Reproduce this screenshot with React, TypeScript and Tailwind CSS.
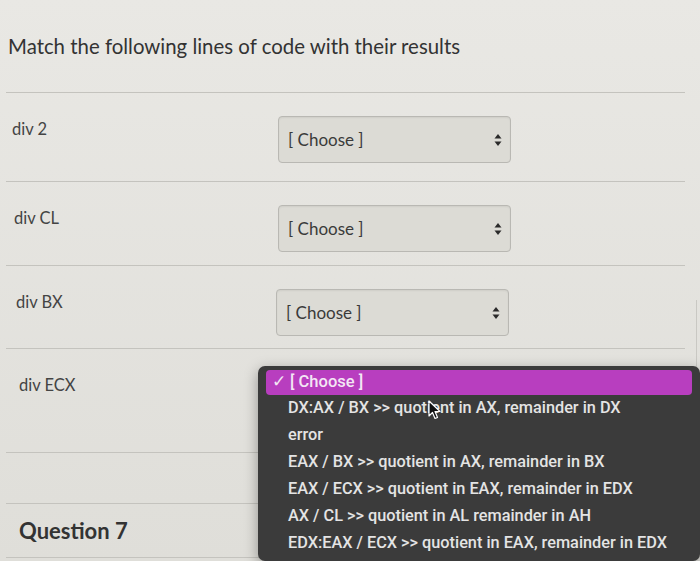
import React from "react";

const rows = [
  { label: "div 2", height: "h-[89px]", pad: "pl-[6px]", shift: "ml-0" },
  { label: "div CL", height: "h-[84px]", pad: "pl-[8px]", shift: "-ml-[2px]" },
  { label: "div BX", height: "h-[83px]", pad: "pl-[10px]", shift: "-ml-[6px]" },
];

const options = [
  "DX:AX / BX >> quotient in AX, remainder in DX",
  "error",
  "EAX / BX >> quotient in AX, remainder in BX",
  "EAX / ECX >> quotient in EAX, remainder in EDX",
  "AX / CL >> quotient in AL remainder in AH",
  "EDX:EAX / ECX >> quotient in EAX, remainder in EDX",
];

function Arrows() {
  return (
    <svg width="8" height="14" viewBox="0 0 8 14" className="text-[#2a2a2a]">
      <path d="M4 1 L7.5 5.5 H0.5 Z" fill="currentColor" />
      <path d="M4 13 L7.5 8.5 H0.5 Z" fill="currentColor" />
    </svg>
  );
}

function FakeSelect({ shift }: { shift: string }) {
  return (
    <div className={`${shift} mt-[23px] flex h-[47px] w-[233px] items-center justify-between rounded-[4px] border border-[#b9b8b3] bg-[#dcdbd5] pl-[9px] pr-[8px] shadow-[inset_0_1px_2px_rgba(0,0,0,0.06)]`}>
      <span className="text-[17px] leading-none text-[#3a3a3a]">[ Choose ]</span>
      <Arrows />
    </div>
  );
}

function Cursor() {
  return (
    <svg width="14" height="20" viewBox="0 0 14 20" className="absolute left-[170px] top-[34px]">
      <path d="M1 1 L1 16 L4.5 12.5 L7 18.5 L9.5 17.5 L7 11.5 L12 11.5 Z" fill="#111" stroke="#fff" strokeWidth="1.2" strokeLinejoin="round" />
    </svg>
  );
}

function DropdownMenu() {
  return (
    <div
      className="absolute left-[258px] top-[366px] w-[442px] rounded-[7px] bg-[#3b3b3b] pt-[4px] pb-[4px] shadow-[0_4px_14px_rgba(0,0,0,0.35)]"
      style={{ fontFamily: "Roboto, 'Liberation Sans', sans-serif" }}
    >
      <div className="mx-[8px] flex h-[25px] items-center rounded-[4px] bg-[#b83ebf] pl-[6px] text-[16.5px] font-medium leading-none text-[#f3e6f4]">
        <span className="w-[18px]">✓</span>
        <span>[ Choose ]</span>
      </div>
      {options.map((o) => (
        <div key={o} className="flex h-[27px] items-center pl-[30px] text-[16.3px] font-medium leading-none text-[#e4e4e4]">
          {o}
        </div>
      ))}
      <Cursor />
    </div>
  );
}

export default function App() {
  return (
    <div
      className="relative h-[561px] w-[700px] overflow-hidden bg-gradient-to-b from-[#e9e8e4] to-[#dfded9] text-[#3b3b3b]"
      style={{ fontFamily: "Lato, 'Open Sans', sans-serif" }}
    >
      <div className="h-[92px] pl-[8px] pt-[33px]">
        <h1 className="text-[20.4px] leading-[26px] text-[#333]">
          Match the following lines of code with their results
        </h1>
      </div>

      <div className="ml-[6px] mr-[15px]">
        {rows.map((r) => (
          <div key={r.label} className={`${r.height} ${r.pad} flex items-start border-t border-[#c4c3be]`}>
            <div className="w-[266px] pt-[26px] text-[16.5px] leading-[20px] text-[#444]">{r.label}</div>
            <FakeSelect shift={r.shift} />
          </div>
        ))}
        {/* last row: its select sits under the open menu */}
        <div className="h-[104px] border-t border-[#c4c3be] pl-[13px]">
          <div className="pt-[26px] text-[16.5px] leading-[20px] text-[#444]">div ECX</div>
        </div>
        <div className="h-[51px] border-t border-[#c4c3be]" />
        <div className="flex h-[54px] items-center border-t border-[#c4c3be] pl-[13px]">
          <h2 className="text-[22px] font-bold text-[#333]">Question 7</h2>
        </div>
        <div className="border-t border-[#c4c3be]" />
      </div>

      <div className="absolute right-[3px] top-[300px] h-[70px] border-r border-[#c9c8c3]" />

      <DropdownMenu />
    </div>
  );
}
